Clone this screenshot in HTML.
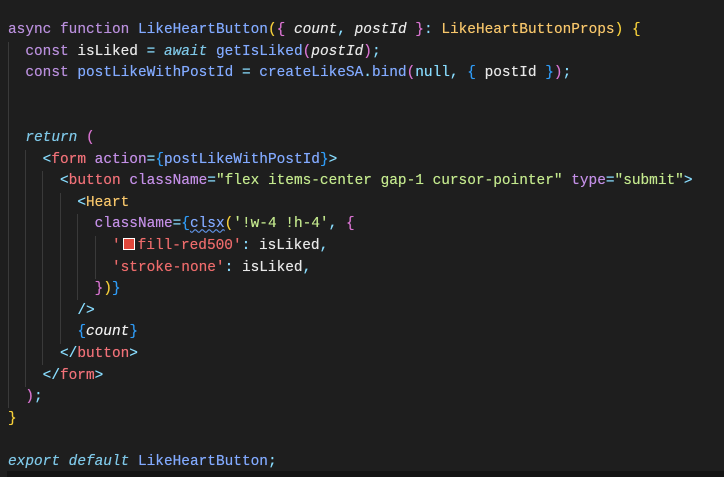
<!DOCTYPE html>
<html><head><meta charset="utf-8"><style>
html,body{margin:0;padding:0;background:#1e1e1e;width:724px;height:477px;overflow:hidden;}
pre{margin:0;position:absolute;left:8px;top:20px;font-family:"Liberation Mono",monospace;font-size:14.45px;line-height:21.6px;color:#e8e8e8;text-shadow:0 0 0.4px currentColor;}
.k{color:#b98fdc}.f{color:#82aaff}.t{color:#f7c66b}.g{color:#f5cf3a}.p{color:#d873d0}.b{color:#2f9bf5}
.c{color:#89ddff}.i{font-style:italic}.ki{color:#7fc8e8;font-style:italic}.tag{color:#f07178}.a{color:#c38fe6}
.s{color:#c3e88d}.r{color:#ec6b6b}.w{color:#f0f0f0}
.sw{display:inline-block;width:10px;height:10px;background:#e0483c;border:1px solid #fff;margin:0 3px 0 2px;vertical-align:-1px}
.u{text-decoration:underline wavy #5a8ee0;text-decoration-thickness:1px}
.g1{position:absolute;width:1px;background:#3a3a3a}
.bot{position:absolute;left:7px;right:0;top:471px;height:6px;background:#141414}
</style></head><body>
<div class="g1" style="left:8px;top:42px;height:366px"></div>
<div class="g1" style="left:25px;top:150px;height:237px"></div>
<div class="g1" style="left:42px;top:171px;height:194px"></div>
<div class="g1" style="left:60px;top:193px;height:151px"></div>
<div class="g1" style="left:77px;top:214px;height:86px"></div>
<div class="g1" style="left:95px;top:236px;height:43px"></div>
<pre><span class="k">async</span> <span class="k">function</span> <span class="f">LikeHeartButton</span><span class="g">(</span><span class="p">{</span> <span class="i">count</span><span class="c">,</span> <span class="i">postId</span> <span class="p">}</span><span class="c">:</span> <span class="t">LikeHeartButtonProps</span><span class="g">)</span> <span class="g">{</span>
  <span class="k">const</span> isLiked <span class="c">=</span> <span class="ki">await</span> <span class="f">getIsLiked</span><span class="p">(</span><span class="i">postId</span><span class="p">)</span><span class="c">;</span>
  <span class="k">const</span> <span class="f">postLikeWithPostId</span> <span class="c">=</span> <span class="f">createLikeSA</span><span class="c">.</span><span class="f">bind</span><span class="p">(</span><span class="c">null,</span> <span class="b">{</span> postId <span class="b">}</span><span class="p">)</span><span class="c">;</span>


  <span class="ki">return</span> <span class="p">(</span>
    <span class="c">&lt;</span><span class="tag">form</span> <span class="a">action</span><span class="c">=</span><span class="b">{</span><span class="f">postLikeWithPostId</span><span class="b">}</span><span class="c">&gt;</span>
      <span class="c">&lt;</span><span class="tag">button</span> <span class="a">className</span><span class="c">=</span><span class="s">"flex items-center gap-1 cursor-pointer"</span> <span class="a">type</span><span class="c">=</span><span class="s">"submit"</span><span class="c">&gt;</span>
        <span class="c">&lt;</span><span class="t">Heart</span>
          <span class="a">className</span><span class="c">=</span><span class="b">{</span><span class="f u">clsx</span><span class="g">(</span><span class="s">'!w-4 !h-4'</span><span class="c">,</span> <span class="p">{</span>
            <span class="r">'</span><span class="sw"></span><span class="r">fill-red500'</span><span class="c">:</span> isLiked<span class="c">,</span>
            <span class="r">'stroke-none'</span><span class="c">:</span> isLiked<span class="c">,</span>
          <span class="p">}</span><span class="g">)</span><span class="b">}</span>
        <span class="c">/&gt;</span>
        <span class="b">{</span><span class="i w">count</span><span class="b">}</span>
      <span class="c">&lt;/</span><span class="tag">button</span><span class="c">&gt;</span>
    <span class="c">&lt;/</span><span class="tag">form</span><span class="c">&gt;</span>
  <span class="p">)</span><span class="c">;</span>
<span class="g">}</span>

<span class="ki">export</span> <span class="ki">default</span> <span class="f">LikeHeartButton</span><span class="c">;</span></pre>
<div class="bot"></div>
</body></html>
